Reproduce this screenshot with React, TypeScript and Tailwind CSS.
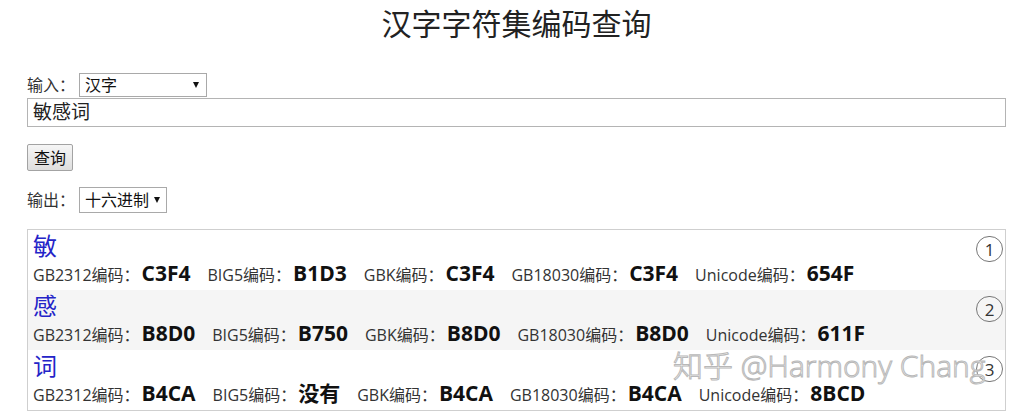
import React from "react";

const FONT = { fontFamily: '"Open Sans", "Noto Sans CJK SC", sans-serif' };

type Row = { ch: string; codes: [string, string][] };

const rows: Row[] = [
  {
    ch: "敏",
    codes: [
      ["GB2312编码：", "C3F4"],
      ["BIG5编码：", "B1D3"],
      ["GBK编码：", "C3F4"],
      ["GB18030编码：", "C3F4"],
      ["Unicode编码：", "654F"],
    ],
  },
  {
    ch: "感",
    codes: [
      ["GB2312编码：", "B8D0"],
      ["BIG5编码：", "B750"],
      ["GBK编码：", "B8D0"],
      ["GB18030编码：", "B8D0"],
      ["Unicode编码：", "611F"],
    ],
  },
  {
    ch: "词",
    codes: [
      ["GB2312编码：", "B4CA"],
      ["BIG5编码：", "没有"],
      ["GBK编码：", "B4CA"],
      ["GB18030编码：", "B4CA"],
      ["Unicode编码：", "8BCD"],
    ],
  },
];

function Arrow() {
  return (
    <span className="inline-block w-0 h-0 border-l-[3.5px] border-r-[3.5px] border-t-[6px] border-l-transparent border-r-transparent border-t-[#111]" />
  );
}

export default function App() {
  return (
    <div className="relative w-[1021px] h-[417px] bg-white text-[#333] overflow-hidden" style={FONT}>
      <div className="pl-[27px] pr-[15px]">
        <h1 className="pt-[4px] text-center text-[30px] leading-[40px] text-[#222] font-normal">
          汉字字符集编码查询
        </h1>

        <div className="mt-[29px] flex items-center h-[24px]">
          <span className="w-[52px] text-[16px] leading-[24px]">输入：</span>
          <div className="w-[128px] h-[24px] border border-[#a9a9a9] bg-white flex items-center justify-between pl-[5px] pr-[7px] text-[16px] text-[#111]">
            <span>汉字</span>
            <Arrow />
          </div>
        </div>
        <div className="mt-[1px] h-[29px] border border-[#b4b4b4] bg-white flex items-center pl-[5px] text-[19px] text-[#222]">
          敏感词
        </div>

        <div className="mt-[17px] flex">
          <div className="h-[27px] px-[6px] border border-[#a3a3a3] rounded-[2px] bg-gradient-to-b from-[#f6f6f6] to-[#dedede] flex items-center text-[16px] text-[#111]">
            查询
          </div>
        </div>

        <div className="mt-[16px] flex items-center h-[26px]">
          <span className="w-[52px] text-[16px] leading-[24px]">输出：</span>
          <div className="w-[88px] h-[26px] border border-[#a9a9a9] bg-white flex items-center justify-between pl-[5px] pr-[6px] text-[16px] text-[#111]">
            <span>十六进制</span>
            <Arrow />
          </div>
        </div>

        <div className="mt-[16px] border border-[#cfcfcf]">
          {rows.map((r, i) => (
            <div
              key={i}
              className={`h-[60px] flex justify-between pl-[5px] pt-[2px] ${i === 1 ? "bg-[#f5f5f5]" : "bg-white"}`}
            >
              <div>
                <div className="text-[24px] leading-[28px] text-[#2424c8]">{r.ch}</div>
                <div className="flex items-baseline leading-[26px] whitespace-nowrap">
                  {r.codes.map(([label, val], j) => (
                    <React.Fragment key={j}>
                      <span className="text-[16px] text-[#333]">{label}</span>
                      <span className="ml-[2px] mr-[17px] text-[21px] font-bold text-[#111]">{val}</span>
                    </React.Fragment>
                  ))}
                </div>
              </div>
              <div className="mt-[4px] mr-[2px] w-[27px] h-[26px] rounded-full border border-[#777] flex items-center justify-center text-[17px] leading-none text-[#333]">
                {i + 1}
              </div>
            </div>
          ))}
        </div>
      </div>

      <div
        className="absolute left-[673px] top-[351px] text-[30px] leading-[30px] text-white/80 whitespace-nowrap [-webkit-text-stroke:1px_#b8b8b8] pointer-events-none"
        style={{ fontFamily: '"Open Sans", "Noto Sans CJK SC", sans-serif', fontWeight: 300 }}
      >
        知乎 @Harmony Chang
      </div>
    </div>
  );
}
